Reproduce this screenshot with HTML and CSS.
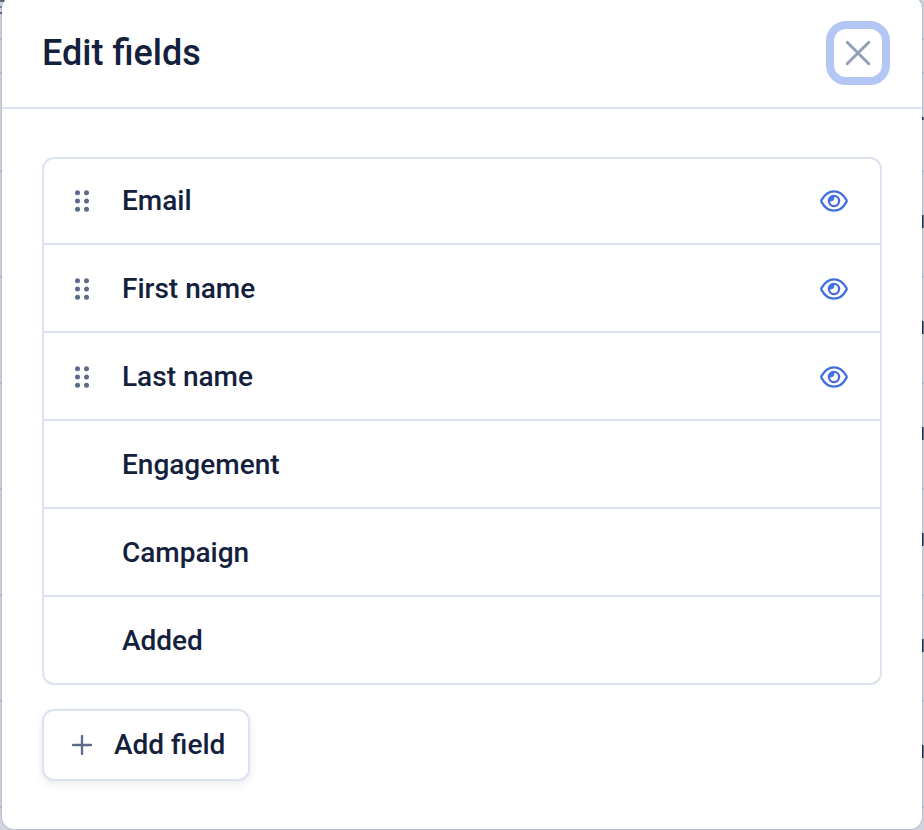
FILE: index.html
```html
<!DOCTYPE html>
<html lang="en">
<head>
  <meta charset="UTF-8">
  <meta name="viewport" content="width=device-width, initial-scale=1.0">
  <title>Edit fields</title>
  <link rel="stylesheet" href="styles.css">
</head>
<body>
  <svg width="0" height="0" class="sprite">
    <symbol id="icon-drag" viewBox="0 0 16 24">
      <circle cx="3.5" cy="3.7" r="2.5"/>
      <circle cx="12.5" cy="3.7" r="2.5"/>
      <circle cx="3.5" cy="12" r="2.5"/>
      <circle cx="12.5" cy="12" r="2.5"/>
      <circle cx="3.5" cy="20.3" r="2.5"/>
      <circle cx="12.5" cy="20.3" r="2.5"/>
    </symbol>
    <symbol id="icon-eye" viewBox="0 0 28 24">
      <path d="M1.6 10.9 C4.5 5.8 8.8 2.3 14 2.3 S23.5 5.8 26.4 10.9 Q27 12 26.4 13.1 C23.5 18.2 19.2 21.7 14 21.7 S4.5 18.2 1.6 13.1 Q1 12 1.6 10.9 Z" fill="none" stroke="currentColor" stroke-width="2.3" stroke-linejoin="round"/>
      <circle cx="14" cy="12" r="5.1" fill="none" stroke="currentColor" stroke-width="2.3"/>
      <path d="M14.2 7 V9.5 A3 3 0 0 1 11.5 12.3 H9 A5.2 5.2 0 0 1 14.2 7 Z" fill="currentColor"/>
    </symbol>
  </svg>

  <!-- page behind the dialog -->
  <div class="table">
    <div class="table-head"></div>
    <div class="table-filter"></div>
    <div class="table-row first"><span></span></div>
    <div class="table-row"><span></span></div>
    <div class="table-row"><span></span></div>
    <div class="table-row"><span></span></div>
    <div class="table-row"><span></span></div>
    <div class="table-row"><span></span></div>
    <div class="table-row"><span></span></div>
  </div>

  <div class="modal">
    <div class="modal-header">
      <h1>Edit fields</h1>
      <button class="close-btn" aria-label="Close">
        <svg width="26" height="26" viewBox="0 0 26 26"><path d="M2.2 2.2 L23.8 23.8 M23.8 2.2 L2.2 23.8"/></svg>
      </button>
    </div>
    <div class="modal-body">
      <ul class="fields">
        <li class="field">
          <svg class="drag" width="16" height="24"><use href="#icon-drag"/></svg>
          <span class="name">Email</span>
          <svg class="eye" width="28" height="24"><use href="#icon-eye"/></svg>
        </li>
        <li class="field">
          <svg class="drag" width="16" height="24"><use href="#icon-drag"/></svg>
          <span class="name">First name</span>
          <svg class="eye" width="28" height="24"><use href="#icon-eye"/></svg>
        </li>
        <li class="field">
          <svg class="drag" width="16" height="24"><use href="#icon-drag"/></svg>
          <span class="name">Last name</span>
          <svg class="eye" width="28" height="24"><use href="#icon-eye"/></svg>
        </li>
        <li class="field fixed"><span class="name">Engagement</span></li>
        <li class="field fixed"><span class="name">Campaign</span></li>
        <li class="field fixed"><span class="name">Added</span></li>
      </ul>
      <button class="add-btn">
        <svg width="20" height="20" viewBox="0 0 20 20"><path d="M10 1 V19 M1 10 H19"/></svg>
        <span>Add field</span>
      </button>
    </div>
  </div>
</body>
</html>
```

FILE: styles.css
```css
* {
  box-sizing: border-box;
}
body {
  margin: 0;
  height: 830px;
  position: relative;
  overflow: hidden;
  font-family: Roboto, sans-serif;
  font-weight: 500;
  color: #14213d;
  background-color: #d2d5e0;
}
.sprite {
  position: absolute;
}
.table-head,
.table-filter,
.table-row {
  border-bottom: 2px solid #bcc1d3;
}
.table-head {
  height: 40px;
  background: linear-gradient(#5d6a86, #5d6a86) 0 0 / 5px 2px no-repeat,
    linear-gradient(#7d88a1, #7d88a1) 0 6px / 2px 2px no-repeat,
    linear-gradient(#5d6a86, #5d6a86) 0 12px / 2px 2px no-repeat;
}
.table-filter {
  height: 34px;
}
.table-row {
  height: 106px;
  display: flex;
  justify-content: flex-end;
  align-items: center;
}
.table-row.first {
  height: 98px;
}
.table-row span {
  width: 2px;
  height: 13px;
  margin-bottom: 5px;
  background: linear-gradient(to right, #1b2a49 50%, #6b7690 50%);
}
.table-row.first span {
  height: 3px;
  margin-bottom: 8px;
}
.modal {
  position: absolute;
  top: -4px;
  left: 2px;
  width: 920px;
  height: 833px;
  background-color: #fff;
  border-radius: 12px;
  box-shadow: 0 0 2px rgba(60, 65, 100, 0.5);
}
.modal-header {
  height: 113px;
  padding: 2px 32px 0 40px;
  display: flex;
  justify-content: space-between;
  align-items: center;
  border-bottom: 2px solid #dce2ef;
}
h1 {
  margin: 0;
  font-size: 36px;
  font-weight: 500;
  line-height: 44px;
}
.close-btn {
  width: 64px;
  height: 64px;
  padding: 0;
  display: flex;
  justify-content: center;
  align-items: center;
  background-color: #fff;
  border: 8px solid #b4c6f3;
  border-radius: 20px;
}
.close-btn path {
  fill: none;
  stroke: #929db7;
  stroke-width: 2.9;
  stroke-linecap: round;
}
.modal-body {
  padding: 48px 40px;
}
.fields {
  margin: 0 0 24px;
  padding: 0;
  list-style: none;
  border: 2px solid #dce2ef;
  border-radius: 12px;
}
.field {
  height: 88px;
  padding: 2px 32px 0 30px;
  display: flex;
  align-items: center;
  border-bottom: 2px solid #dce2ef;
}
.field:first-child {
  height: 86px;
  padding-top: 0;
}
.field:last-child {
  height: 86px;
  border-bottom: none;
}
.field.fixed {
  padding-left: 78px;
}
.name {
  flex: 1;
  font-size: 28px;
  line-height: 40px;
}
.drag {
  margin-right: 32px;
  fill: #5d6a88;
}
.eye {
  color: #416ee0;
}
.add-btn {
  height: 72px;
  padding: 0 23px 0 28px;
  display: flex;
  align-items: center;
  gap: 22px;
  font: inherit;
  font-size: 28px;
  color: inherit;
  background-color: #fff;
  border: 2px solid #dce2ef;
  border-radius: 12px;
  box-shadow: 0 3px 8px rgba(20, 33, 61, 0.09);
}
.add-btn span {
  padding-bottom: 2px;
}
.add-btn path {
  fill: none;
  stroke: #5d6a88;
  stroke-width: 2.3;
  stroke-linecap: round;
}
```
